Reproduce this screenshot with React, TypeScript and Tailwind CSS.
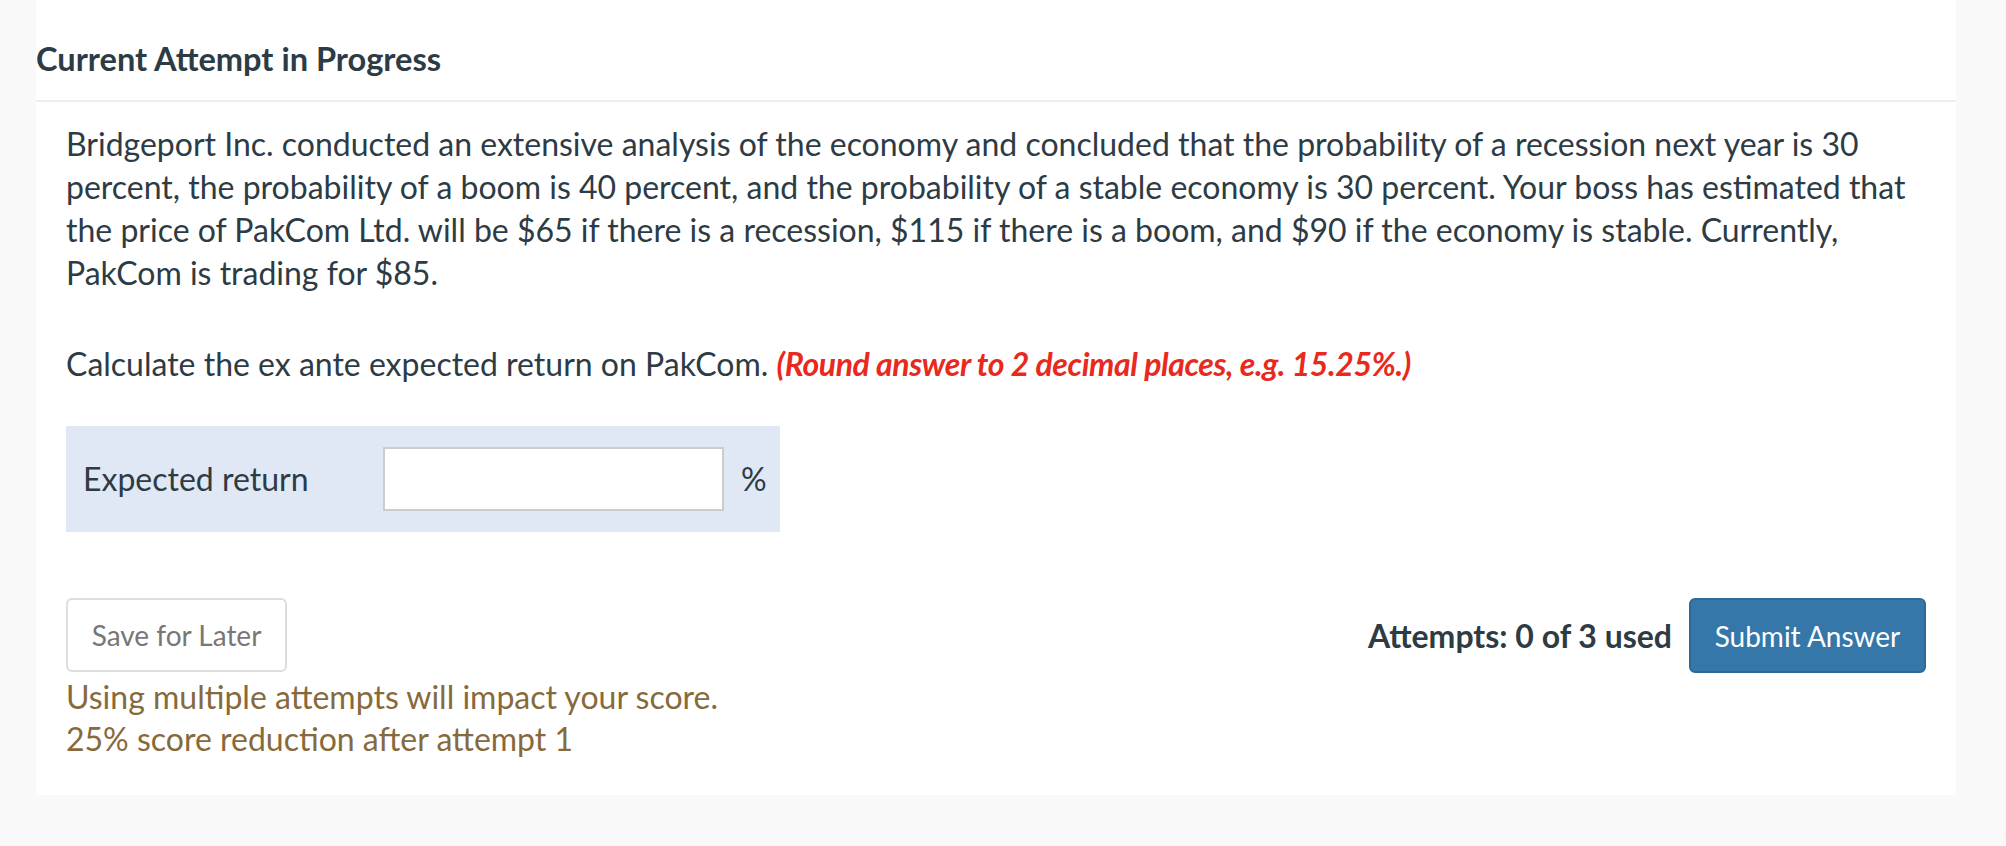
export default function App() {
  return (
    <div className="min-h-[846px] w-full bg-[#f9f9f9] font-['Lato','Liberation_Sans',sans-serif] text-[#2d3b45]">
      <div className="ml-[36px] w-[1920px] bg-white pb-[35px]">
        {/* header */}
        <div className="border-b-2 border-[#eeeeee] pt-[37px] pb-[19px]">
          <h1 className="text-[32.6px] font-bold leading-[44px]">Current Attempt in Progress</h1>
        </div>

        <div className="px-[30px]">
          <p className="mt-[20px] text-[32px] leading-[43px]">
            Bridgeport Inc. conducted an extensive analysis of the economy and concluded that the probability of a recession next year is 30
            percent, the probability of a boom is 40 percent, and the probability of a stable economy is 30 percent. Your boss has estimated that
            the price of PakCom Ltd. will be $65 if there is a recession, $115 if there is a boom, and $90 if the economy is stable. Currently,
            PakCom is trading for $85.
          </p>

          <p className="mt-[48px] text-[32px] leading-[44px]">
            Calculate the ex ante expected return on PakCom.{' '}
            <span className="font-bold italic tracking-[-0.4px] text-[#e8291d]">(Round answer to 2 decimal places, e.g. 15.25%.)</span>
          </p>

          {/* answer row */}
          <div className="mt-[40px] flex h-[106px] w-[714px] items-center bg-[#dfe8f4] pl-[17px]">
            <span className="w-[300px] text-[32px] leading-[44px]">Expected return</span>
            <input
              type="text"
              className="h-[64px] w-[341px] border-2 border-[#cccccc] bg-white px-3 text-[28px] outline-none"
            />
            <span className="ml-[17px] text-[32px] leading-[44px]">%</span>
          </div>

          {/* actions */}
          <div className="mt-[66px] flex items-start justify-between">
            <div>
              <button className="h-[74px] w-[221px] rounded-[6px] border-2 border-[#dddddd] bg-white text-[28px] text-[#777777]">
                Save for Later
              </button>
              <div className="mt-[4px] text-[32px] leading-[42px] text-[#866a3c]">
                <p>Using multiple attempts will impact your score.</p>
                <p>25% score reduction after attempt 1</p>
              </div>
            </div>
            <div className="flex items-center gap-[17px]">
              <span className="text-[32px] font-bold leading-[44px]">Attempts: 0 of 3 used</span>
              <button className="h-[75px] w-[237px] rounded-[6px] border-2 border-[#2e6a97] bg-[#3577a8] text-[28px] text-white">
                Submit Answer
              </button>
            </div>
          </div>
        </div>
      </div>
    </div>
  );
}
